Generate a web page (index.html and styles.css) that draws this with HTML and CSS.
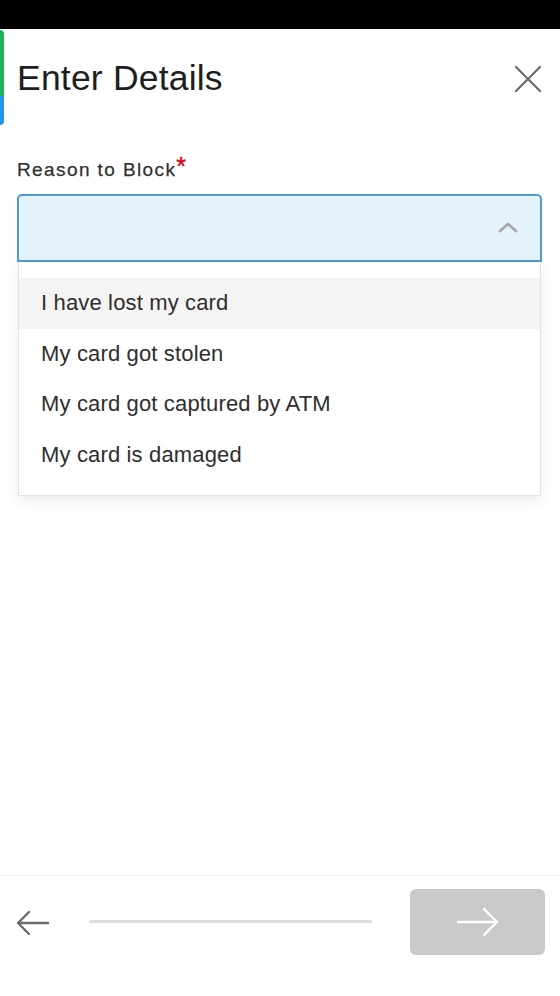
FILE: index.html
```html
<!DOCTYPE html>
<html lang="en">
<head>
<meta charset="utf-8">
<title>Enter Details</title>
<link rel="stylesheet" href="styles.css">
</head>
<body>
<div class="screen">
  <div class="statusbar"></div>
  <header class="header">
    <div class="accent"></div>
    <h1 class="title">Enter Details</h1>
    <button class="close" aria-label="Close">
      <svg width="28" height="28" viewBox="0 0 28 28"><path d="M2 2 L26 26 M26 2 L2 26" stroke="#6b6b6b" stroke-width="2.2" fill="none" stroke-linecap="round"/></svg>
    </button>
  </header>
  <main class="content">
    <label class="label">Reason to Block<span class="req">*</span></label>
    <div class="select">
      <div class="select-box">
        <svg class="chevron" width="20" height="12" viewBox="0 0 20 12"><path d="M2 10 L10 3 L18 10" stroke="#a9a9a9" stroke-width="2.8" fill="none" stroke-linecap="round" stroke-linejoin="round"/></svg>
      </div>
      <ul class="options">
        <li class="option active">I have lost my card</li>
        <li class="option">My card got stolen</li>
        <li class="option">My card got captured by ATM</li>
        <li class="option">My card is damaged</li>
      </ul>
    </div>
  </main>
  <footer class="footer">
    <button class="back" aria-label="Back">
      <svg width="34" height="26" viewBox="0 0 34 26"><path d="M32 13 H3 M13 2 L2 13 L13 24" stroke="#6b6b6b" stroke-width="2.4" fill="none" stroke-linecap="round" stroke-linejoin="round"/></svg>
    </button>
    <div class="progress"></div>
    <button class="next" aria-label="Next">
      <svg width="42" height="30" viewBox="0 0 42 30"><path d="M1 15 H40 M27 2 L40 15 L27 28" stroke="#ffffff" stroke-width="2.4" fill="none" stroke-linecap="round" stroke-linejoin="round"/></svg>
    </button>
  </footer>
</div>
</body>
</html>
```

FILE: styles.css
```css
* { box-sizing: border-box; }
html, body {
  margin: 0;
  padding: 0;
  background: #ffffff;
}
body {
  font-family: "Liberation Sans", Arial, sans-serif;
  color: #2b2b2b;
}
.screen {
  width: 560px;
  height: 996px;
  display: flex;
  flex-direction: column;
  overflow: hidden;
}
.statusbar {
  height: 29px;
  background: #000;
  flex: none;
}
.header {
  margin-top: 1px;
  height: 95px;
  display: flex;
  align-items: center;
  flex: none;
}
.accent {
  width: 4px;
  align-self: stretch;
  border-radius: 0 4px 4px 0;
  background: linear-gradient(to bottom, #1fb35a 0%, #1fb35a 70%, #2196e8 70%, #2196e8 100%);
}
.title {
  flex: 1;
  margin: 0 0 0 13px;
  font-size: 35.5px;
  font-weight: 400;
  line-height: 40px;
  color: #1e1e1e;
  letter-spacing: 0.2px;
}
.close {
  border: 0;
  background: none;
  padding: 0;
  margin-right: 18px;
  margin-top: 2px;
  width: 28px;
  height: 28px;
  display: flex;
}
.content {
  flex: 1;
  padding: 33px 18px 0 17px;
}
.label {
  display: block;
  font-size: 19px;
  line-height: 24px;
  color: #2f2f2f;
  letter-spacing: 1.4px;
  -webkit-text-stroke: 0.25px #2f2f2f;
}
.req {
  color: #d0021b;
  margin-left: 0;
  font-size: 25px;
  line-height: 0;
  vertical-align: 1px;
  -webkit-text-stroke: 0.4px #d0021b;
}
.select {
  margin-top: 12px;
}
.select-box {
  height: 68px;
  border: 2px solid #4f9bd0;
  border-radius: 5px 5px 0 0;
  background: #e4f2fc;
  display: flex;
  align-items: center;
  justify-content: flex-end;
  padding-right: 22px;
}
.chevron {
  display: block;
  margin-top: -2px;
}
.options {
  list-style: none;
  margin: 0 1px;
  padding: 16px 0 15px;
  background: #fff;
  border: 1px solid #e2e2e2;
  border-top: 0;
  box-shadow: 0 5px 12px rgba(0, 0, 0, 0.08);
}
.option {
  height: 50.5px;
  display: flex;
  align-items: center;
  padding-left: 22px;
  font-size: 22px;
  color: #2e2e2e;
  letter-spacing: 0.15px;
}
.option.active {
  background: #f5f4f2;
}
.footer {
  height: 121px;
  flex: none;
  border-top: 1px solid #f0f0f0;
  display: flex;
  align-items: flex-start;
  padding: 13px 15px 0 16px;
}
.back {
  border: 0;
  background: none;
  padding: 0;
  width: 34px;
  height: 26px;
  margin-top: 21px;
  display: flex;
}
.progress {
  flex: 1;
  height: 3px;
  background: #dedede;
  margin: 31px 38px 0 39px;
  border-radius: 2px;
}
.next {
  width: 135px;
  height: 66px;
  border: 0;
  border-radius: 6px;
  background: #c9c9c9;
  display: flex;
  align-items: center;
  justify-content: center;
  padding: 0;
}
```
